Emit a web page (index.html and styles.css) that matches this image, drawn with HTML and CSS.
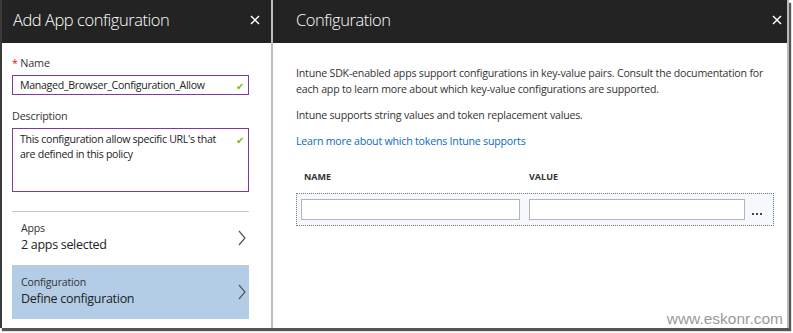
FILE: index.html
```html
<!DOCTYPE html>
<html lang="en">

<head>
    <meta charset="UTF-8">
    <meta name="viewport" content="width=device-width, initial-scale=1.0">
    <title>Add App configuration</title>
    <link rel="stylesheet" href="styles.css">
</head>

<body>
    <div class="frame">
        <div class="blade blade-left">
            <div class="blade-head">
                <h2>Add App configuration</h2>
                <svg class="close" width="10" height="10" viewBox="0 0 10 10"><path d="M1 1 L9 9 M9 1 L1 9" stroke="#fff" stroke-width="1.5"/></svg>
            </div>
            <div class="blade-body">
                <label class="field-label"><span class="req">*</span> Name</label>
                <div class="input-box">
                    <span class="input-text">Managed_Browser_Configuration_Allow</span>
                    <span class="check">&#x2714;</span>
                </div>

                <label class="field-label desc-label">Description</label>
                <div class="input-box area">
                    <span class="input-text">This configuration allow specific URL's that are defined in this policy</span>
                    <span class="check">&#x2714;</span>
                </div>

                <div class="nav-item">
                    <div>
                        <div class="nav-title">Apps</div>
                        <div class="nav-value">2 apps selected</div>
                    </div>
                    <svg class="chevron" width="8" height="16" viewBox="0 0 8 16"><path d="M1 1 L7 8 L1 15" fill="none" stroke="#555" stroke-width="1.2"/></svg>
                </div>
                <div class="nav-item active">
                    <div>
                        <div class="nav-title">Configuration</div>
                        <div class="nav-value">Define configuration</div>
                    </div>
                    <svg class="chevron" width="8" height="16" viewBox="0 0 8 16"><path d="M1 1 L7 8 L1 15" fill="none" stroke="#555" stroke-width="1.2"/></svg>
                </div>
            </div>
        </div>

        <div class="blade blade-right">
            <div class="blade-head">
                <h2>Configuration</h2>
                <svg class="close" width="10" height="10" viewBox="0 0 10 10"><path d="M1 1 L9 9 M9 1 L1 9" stroke="#fff" stroke-width="1.5"/></svg>
            </div>
            <div class="blade-body">
                <p class="info">Intune SDK-enabled apps support configurations in key-value pairs. Consult the documentation for each app to learn more about which key-value configurations are supported.</p>
                <p class="info">Intune supports string values and token replacement values.</p>
                <a class="link" href="#">Learn more about which tokens Intune supports</a>

                <div class="kv-head">
                    <span class="kv-col">NAME</span>
                    <span class="kv-col">VALUE</span>
                </div>
                <div class="kv-row">
                    <input class="kv-input name" type="text">
                    <input class="kv-input value" type="text">
                    <span class="more"><i></i><i></i><i></i></span>
                </div>

                <div class="watermark">www.eskonr.com</div>
            </div>
        </div>
    </div>
</body>

</html>
```

FILE: styles.css
```css
* {
    margin: 0;
    padding: 0;
    box-sizing: border-box;
    font-family: "Open Sans", "Noto Sans", sans-serif;
}

body {
    background: #fff;
    width: 793px;
    height: 333px;
    overflow: hidden;
}

.frame {
    display: flex;
    width: 789px;
    height: 328px;
    border-left: 2px solid #3a3a3a;
    border-right: 2px solid #b8b8b8;
    box-shadow: 2px 3px 1px #555;
    background: #fff;
}

.blade {
    display: flex;
    flex-direction: column;
}

.blade-left {
    width: 271px;
    flex-shrink: 0;
    border-right: 2px solid #bdbdbd;
}

.blade-right {
    flex: 1;
    min-width: 0;
}

.blade-head {
    height: 43px;
    background: #232323;
    color: #fff;
    display: flex;
    align-items: center;
    justify-content: space-between;
    padding: 0 9px 4px 11px;
}

.blade-head h2 {
    font-weight: 300;
    font-size: 16.5px;
    letter-spacing: -0.45px;
}

.blade-right .blade-head h2 {
    padding-left: 12px;
}

.close {
    margin-top: 1px;
}

.blade-left .close {
    margin-right: 2px;
}

.blade-right .close {
    margin-right: -4px;
}

.blade-left .blade-body {
    padding: 12px 22px 0 10px;
}

.field-label {
    display: block;
    font-size: 10.8px;
    line-height: 16px;
    color: #333;
    letter-spacing: -0.2px;
}

.req {
    color: #e81123;
}

.input-box {
    margin-top: 4px;
    height: 20px;
    border: 1px solid #7e3aa1;
    display: flex;
    justify-content: space-between;
    align-items: center;
    padding: 0 4px 0 7px;
}

.input-text {
    font-size: 10.6px;
    letter-spacing: -0.3px;
    color: #222;
}

.check {
    color: #7fba00;
    font-size: 10px;
    margin-top: 2px;
}

.desc-label {
    margin-top: 13px;
}

.area {
    height: 64px;
    align-items: flex-start;
    padding-top: 3px;
}

.area .input-text {
    line-height: 15px;
    width: 205px;
}

.area .check {
    margin-top: 1px;
}

.nav-item {
    margin-top: 19px;
    height: 54px;
    border-top: 1px solid #c8c8c8;
    display: flex;
    align-items: center;
    justify-content: space-between;
    padding: 0 3px 4px 9px;
}

.nav-item.active {
    margin-top: 0;
    background: #b3cde6;
}

.nav-title {
    font-size: 10.6px;
    letter-spacing: -0.2px;
    color: #333;
    line-height: 16px;
}

.nav-value {
    font-size: 12.5px;
    letter-spacing: -0.3px;
    color: #222;
    line-height: 18px;
}

.chevron {
    margin-top: 2px;
}

.blade-right .blade-body {
    flex: 1;
    padding: 22px 10px 0 23px;
    position: relative;
}

.info {
    font-size: 10.6px;
    letter-spacing: -0.2px;
    line-height: 16px;
    color: #333;
    margin-bottom: 10px;
}

.link {
    display: block;
    font-size: 10.6px;
    letter-spacing: -0.2px;
    color: #0b6bc1;
    text-decoration: none;
    line-height: 16px;
}

.kv-head {
    display: flex;
    margin-top: 19px;
    padding-left: 8px;
    height: 16px;
    align-items: center;
}

.kv-col {
    font-size: 9px;
    font-weight: 700;
    color: #333;
    width: 225px;
}

.kv-row {
    margin-top: 9px;
    width: 478px;
    height: 33px;
    border: 1px dotted #7a7a7a;
    background: #f5f8fd;
    display: flex;
    align-items: center;
    padding: 0 6px 0 4px;
    gap: 9px;
}

.kv-input {
    height: 21px;
    border: 1px solid #b5b5b5;
    background: #fff;
    outline: none;
}

.kv-input.name {
    width: 219px;
}

.kv-input.value {
    width: 216px;
}

.more {
    display: flex;
    gap: 2px;
    margin-top: 8px;
    margin-left: -2px;
}

.more i {
    width: 2px;
    height: 2px;
    background: #444;
}

.watermark {
    position: absolute;
    right: 4px;
    bottom: 0;
    font-family: "Liberation Sans", Arial, sans-serif;
    font-size: 15.5px;
    color: #9a9a9a;
}
```
